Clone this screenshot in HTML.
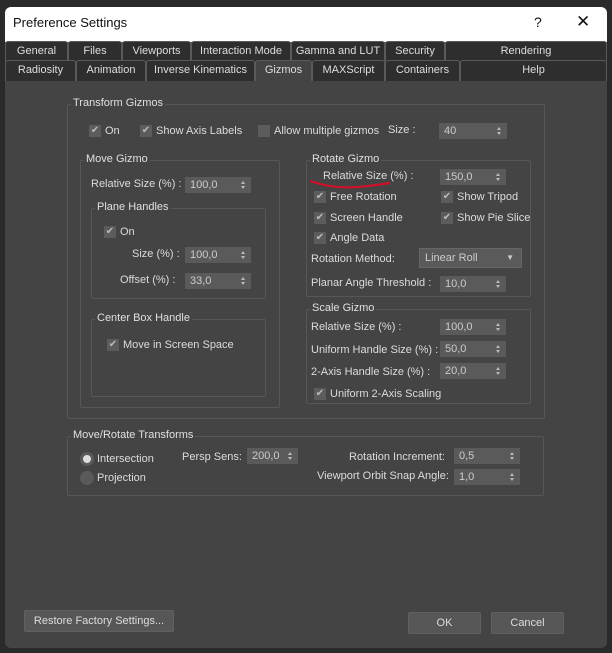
<!DOCTYPE html><html><head><style>
*{margin:0;padding:0;box-sizing:border-box}
body{width:612px;height:653px;background:#2a2a2a;font-family:"Liberation Sans",sans-serif;font-size:11px;color:#dcdcdc;position:relative;overflow:hidden}
.a{position:absolute;white-space:nowrap}
.dlg{position:absolute;left:5px;top:7px;width:602px;height:641px;background:#444;border-radius:6px;overflow:hidden}
.title{position:absolute;left:0;top:0;width:602px;height:35px;background:#fff;color:#111;font-size:13px}
.tab{position:absolute;background:#2e2e2e;border:1px solid #5a5a5a;border-bottom:none;color:#ddd;text-align:center;font-size:11px;line-height:18px;border-radius:3px 3px 0 0}
.g{position:absolute;border:1px solid #575757;border-radius:2px}
.gt{position:absolute;background:#444;padding:0 2px;top:-8px;left:3px;color:#e0e0e0}
.sp,.dd{position:absolute;height:16px;background:#5a5a5a;color:#ccc;padding-left:5px;line-height:16px}
.sp:after{content:"";position:absolute;right:6px;top:4px;border-left:2.5px solid transparent;border-right:2.5px solid transparent;border-bottom:3px solid #bbb}
.sp:before{content:"";position:absolute;right:6px;top:9px;border-left:2.5px solid transparent;border-right:2.5px solid transparent;border-top:3px solid #bbb}
.cb{position:absolute;width:12px;height:12px;background:#5c5c5c;color:#bbb;font-size:10px;line-height:12px;text-align:center}
.btn{position:absolute;background:#575757;border:1px solid #606060;border-radius:2px;text-align:center;line-height:20px;color:#ddd}
.rd{position:absolute;width:14px;height:14px;border-radius:50%;background:#5a5a5a}
</style></head><body>
<div class="dlg">
<div class="title"><span class="a" style="left:8px;top:8px">Preference Settings</span><span class="a" style="left:529px;top:7px;font-size:14px">?</span><span class="a" style="left:571px;top:5px;font-size:17px">✕</span></div>
<div class="tab" style="left:0;top:34px;width:63px;height:20px">General</div>
<div class="tab" style="left:63px;top:34px;width:54px;height:20px">Files</div>
<div class="tab" style="left:117px;top:34px;width:69px;height:20px">Viewports</div>
<div class="tab" style="left:186px;top:34px;width:100px;height:20px">Interaction Mode</div>
<div class="tab" style="left:286px;top:34px;width:94px;height:20px">Gamma and LUT</div>
<div class="tab" style="left:380px;top:34px;width:60px;height:20px">Security</div>
<div class="tab" style="left:440px;top:34px;width:162px;height:20px">Rendering</div>
<div class="tab" style="left:0;top:53px;width:71px;height:21px">Radiosity</div>
<div class="tab" style="left:71px;top:53px;width:70px;height:21px">Animation</div>
<div class="tab" style="left:141px;top:53px;width:109px;height:21px">Inverse Kinematics</div>
<div class="tab" style="left:250px;top:53px;width:57px;height:21px;background:#444">Gizmos</div>
<div class="tab" style="left:307px;top:53px;width:73px;height:21px">MAXScript</div>
<div class="tab" style="left:380px;top:53px;width:75px;height:21px">Containers</div>
<div class="tab" style="left:455px;top:53px;width:147px;height:21px">Help</div>
</div>
<div class="g" style="left:67px;top:104px;width:478px;height:315px"><span class="gt">Transform Gizmos</span></div>
<div class="cb" style="left:89px;top:125px">✔</div><span class="a" style="left:105px;top:125px">On</span>
<div class="cb" style="left:140px;top:125px">✔</div><span class="a" style="left:156px;top:125px">Show Axis Labels</span>
<div class="cb" style="left:258px;top:125px"></div><span class="a" style="left:274px;top:125px">Allow multiple gizmos</span>
<span class="a" style="left:388px;top:124px">Size :</span><div class="sp" style="left:439px;top:123px;width:68px">40</div>

<div class="g" style="left:80px;top:160px;width:200px;height:248px"><span class="gt">Move Gizmo</span></div>
<span class="a" style="left:91px;top:178px">Relative Size (%) :</span><div class="sp" style="left:185px;top:177px;width:66px">100,0</div>
<div class="g" style="left:91px;top:208px;width:175px;height:91px"><span class="gt">Plane Handles</span></div>
<div class="cb" style="left:104px;top:226px">✔</div><span class="a" style="left:120px;top:226px">On</span>
<span class="a" style="left:132px;top:248px">Size (%) :</span><div class="sp" style="left:185px;top:247px;width:66px">100,0</div>
<span class="a" style="left:120px;top:274px">Offset (%) :</span><div class="sp" style="left:185px;top:273px;width:66px">33,0</div>
<div class="g" style="left:91px;top:319px;width:175px;height:78px"><span class="gt">Center Box Handle</span></div>
<div class="cb" style="left:107px;top:339px">✔</div><span class="a" style="left:123px;top:339px">Move in Screen Space</span>

<div class="g" style="left:306px;top:160px;width:225px;height:137px"><span class="gt">Rotate Gizmo</span></div>
<span class="a" style="left:323px;top:170px">Relative Size (%) :</span><div class="sp" style="left:440px;top:169px;width:66px">150,0</div>
<svg class="a" style="left:308px;top:178px" width="85" height="14"><path d="M2 3 Q25 11 50 9 Q70 7 82 5" stroke="#d0102a" stroke-width="2.2" fill="none"/></svg>
<div class="cb" style="left:314px;top:191px">✔</div><span class="a" style="left:330px;top:191px">Free Rotation</span>
<div class="cb" style="left:441px;top:191px">✔</div><span class="a" style="left:457px;top:191px">Show Tripod</span>
<div class="cb" style="left:314px;top:212px">✔</div><span class="a" style="left:330px;top:212px">Screen Handle</span>
<div class="cb" style="left:441px;top:212px">✔</div><span class="a" style="left:457px;top:212px">Show Pie Slice</span>
<div class="cb" style="left:314px;top:232px">✔</div><span class="a" style="left:330px;top:232px">Angle Data</span>
<span class="a" style="left:311px;top:253px">Rotation Method:</span>
<div class="dd" style="left:419px;top:248px;width:103px;height:20px;line-height:18px;border:1px solid #666">Linear Roll<span style="position:absolute;right:7px;top:0;font-size:8px">▼</span></div>
<span class="a" style="left:311px;top:277px">Planar Angle Threshold :</span><div class="sp" style="left:440px;top:276px;width:66px">10,0</div>

<div class="g" style="left:306px;top:309px;width:225px;height:95px"><span class="gt">Scale Gizmo</span></div>
<span class="a" style="left:311px;top:321px">Relative Size (%) :</span><div class="sp" style="left:440px;top:319px;width:66px">100,0</div>
<span class="a" style="left:311px;top:344px">Uniform Handle Size (%) :</span><div class="sp" style="left:440px;top:341px;width:66px">50,0</div>
<span class="a" style="left:311px;top:366px">2-Axis Handle Size (%) :</span><div class="sp" style="left:440px;top:363px;width:66px">20,0</div>
<div class="cb" style="left:314px;top:388px">✔</div><span class="a" style="left:330px;top:388px">Uniform 2-Axis Scaling</span>

<div class="g" style="left:67px;top:436px;width:477px;height:60px"><span class="gt">Move/Rotate Transforms</span></div>
<div class="rd" style="left:80px;top:452px"><div style="position:absolute;left:3px;top:3px;width:8px;height:8px;border-radius:50%;background:#ddd"></div></div><span class="a" style="left:97px;top:453px">Intersection</span>
<div class="rd" style="left:80px;top:471px"></div><span class="a" style="left:97px;top:472px">Projection</span>
<span class="a" style="left:182px;top:451px">Persp Sens:</span><div class="sp" style="left:247px;top:448px;width:51px">200,0</div>
<span class="a" style="left:349px;top:451px">Rotation Increment:</span><div class="sp" style="left:454px;top:448px;width:66px">0,5</div>
<span class="a" style="left:317px;top:470px">Viewport Orbit Snap Angle:</span><div class="sp" style="left:454px;top:469px;width:66px">1,0</div>

<div class="btn" style="left:24px;top:610px;width:150px;height:22px">Restore Factory Settings...</div>
<div class="btn" style="left:408px;top:612px;width:73px;height:22px">OK</div>
<div class="btn" style="left:491px;top:612px;width:73px;height:22px">Cancel</div>
</body></html>
